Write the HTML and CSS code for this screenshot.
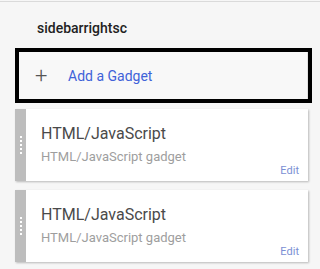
FILE: index.html
```html
<!DOCTYPE html>
<html>
<head>
  <title>Layout</title>
  <link rel="stylesheet" href="styles.css">
</head>
<body>

<div class="page">
  <h2 class="section-title">sidebarrightsc</h2>

  <div class="add-gadget">
    <div class="add-inner">
      <span class="plus">+</span>
      <span class="add-label">Add a Gadget</span>
    </div>
  </div>

  <div class="widget">
    <div class="handle"><span class="dots"></span></div>
    <div class="widget-body">
      <div class="widget-text">
        <div class="widget-title">HTML/JavaScript</div>
        <div class="widget-sub">HTML/JavaScript gadget</div>
      </div>
      <a class="edit">Edit</a>
    </div>
  </div>

  <div class="widget">
    <div class="handle"><span class="dots"></span></div>
    <div class="widget-body">
      <div class="widget-text">
        <div class="widget-title">HTML/JavaScript</div>
        <div class="widget-sub">HTML/JavaScript gadget</div>
      </div>
      <a class="edit">Edit</a>
    </div>
  </div>
</div>

</body>
</html>
```

FILE: styles.css
```css
body {
  margin: 0;
  background-color: #f6f6f6;
  font-family: Roboto, "Liberation Sans", sans-serif;
}

.page {
  margin-top: 1px;
  border-top: 1px solid #dadada;
  height: 267px;
  overflow: hidden;
}

.section-title {
  margin: 0;
  padding: 18px 0 0 37px;
  height: 28px;
  font-size: 14px;
  font-weight: 500;
  line-height: 16px;
  color: #222;
}

.add-gadget {
  margin-left: 15px;
  width: 289px;
  height: 47px;
  border: 4px solid #000;
  background-color: #f8f8f8;
}

.add-inner {
  display: flex;
  align-items: center;
  height: 100%;
  border-right: 1px solid #e2e2e2;
  box-sizing: border-box;
}

.plus {
  width: 12px;
  margin-left: 16px;
  font-size: 22px;
  font-weight: 300;
  line-height: 20px;
  color: #555;
}

.add-label {
  margin-left: 21px;
  font-size: 14px;
  color: #4062d8;
}

.widget {
  display: flex;
  margin: 6px 0 0 15px;
  width: 293px;
  height: 72px;
  background-color: #fff;
  box-shadow: 1px 1px 2px rgba(0, 0, 0, 0.25);
}

.widget + .widget {
  margin-top: 9px;
}

.handle {
  width: 11px;
  background-color: #bdbdbd;
  display: flex;
  align-items: center;
  justify-content: center;
}

.dots {
  width: 2px;
  height: 18px;
  background-image: linear-gradient(#fff 2px, transparent 2px);
  background-size: 2px 4px;
}

.widget-body {
  flex: 1;
  display: flex;
  justify-content: space-between;
  align-items: flex-end;
  padding: 15px 9px 4px 15px;
}

.widget-text {
  align-self: flex-start;
}

.widget-title {
  font-size: 16px;
  line-height: 19px;
  color: #4a4a4a;
}

.widget-sub {
  margin-top: 6px;
  font-size: 13px;
  line-height: 16px;
  color: #9e9e9e;
}

.edit {
  font-size: 11px;
  line-height: 13px;
  color: #7b8fd4;
  cursor: pointer;
}
```
